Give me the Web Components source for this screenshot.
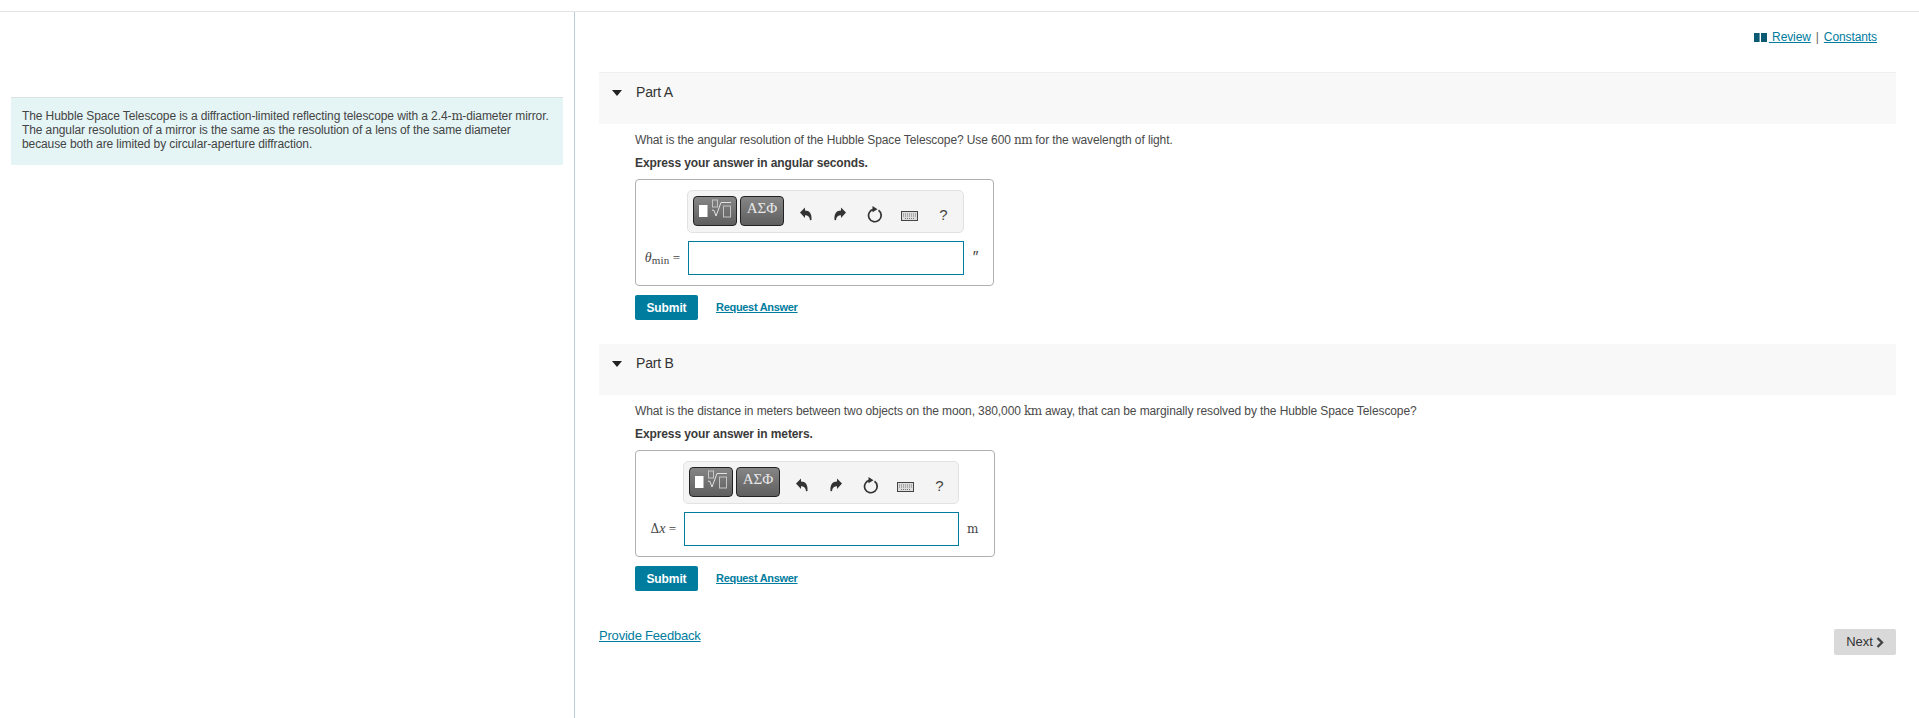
<!DOCTYPE html>
<html lang="en">
<head>
<meta charset="utf-8">
<title>Hubble Space Telescope</title>
<style>
html,body{margin:0;padding:0;background:#fff;height:100%}
body{font:12px/14px "Liberation Sans",Arial,sans-serif;color:#333;overflow:hidden;letter-spacing:-.1px}
</style>
</head>
<body>
<mp-page>
  <mp-intro slot="left">The Hubble Space Telescope is a diffraction-limited reflecting telescope with a 2.4-<mp-math>m</mp-math>-diameter mirror. The angular resolution of a mirror is the same as the resolution of a lens of the same diameter because both are limited by circular-aperture diffraction.</mp-intro>
  <mp-top-links slot="right"></mp-top-links>
  <mp-part slot="right" first title="Part A" instruction="Express your answer in angular seconds.">
    <span slot="question">What is the angular resolution of the Hubble Space Telescope? Use 600 <mp-math>nm</mp-math> for the wavelength of light.</span>
    <mp-answer label-col="51px" main-col="277px" unit-col="28px">
      <span slot="label"><i style="font-size:14px">θ</i><span style="font-size:11px;position:relative;top:2px;letter-spacing:.2px">min</span> =</span>
      <span slot="unit" style="font:italic 16px 'Liberation Sans',sans-serif">″</span>
    </mp-answer>
  </mp-part>
  <mp-part slot="right" title="Part B" instruction="Express your answer in meters.">
    <span slot="question">What is the distance in meters between two objects on the moon, 380,000 <mp-math>km</mp-math> away, that can be marginally resolved by the Hubble Space Telescope?</span>
    <mp-answer label-col="47px" main-col="276px" unit-col="34px">
      <span slot="label"><span style="font:12px 'DejaVu Serif',serif">Δ</span><i style="font-size:14px">x</i> =</span>
      <span slot="unit">m</span>
    </mp-answer>
  </mp-part>
  <mp-footer slot="right"></mp-footer>
</mp-page>
<script>
function def(name, html, init){
  customElements.define(name, class extends HTMLElement{
    constructor(){super();this.attachShadow({mode:'open'}).innerHTML=html;}
    connectedCallback(){ if(init) init(this); }
  });
}
def('mp-page',`<style>
:host{display:block;height:718px;box-sizing:border-box;padding-top:11px}
.wrap{display:flex;height:100%;border-top:1px solid #e2e4e6;box-sizing:border-box}
.left{width:575px;box-sizing:border-box;border-right:1px solid #bccbdc;padding:85px 11px 0 11px}
.right{flex:1;padding:0 23px 0 24px;min-width:0}
</style><div class="wrap"><div class="left"><slot name="left"></slot></div><div class="right"><slot name="right"></slot></div></div>`);
def('mp-math',`<style>:host{display:inline;font-family:"DejaVu Serif","Liberation Serif",serif;font-size:12px;letter-spacing:-.5px}</style><slot></slot>`);
def('mp-intro',`<style>
:host{display:block;background:#e5f5f6;border-top:1px solid #dde3e4;padding:11px 11px 12px 11px;height:68px;box-sizing:border-box;font:12px/14px "Liberation Sans",Arial,sans-serif;color:#444}
</style><slot></slot>`);
def('mp-top-links',`<style>
:host{display:flex;justify-content:flex-end;align-items:center;height:24px;margin:13px 19px 23px 0;font-size:12px;color:#666}
a{color:#007c9e;text-decoration:underline}
svg{display:block;margin-right:2px}
.sep{margin:0 5px}
</style>
<svg width="13" height="9" viewBox="0 0 13 9"><path fill="#0a5a73" d="M0 0h5.600v9H0zM7 0h6v9H7z"/></svg>
<a href="#">&nbsp;Review</a><span class="sep">|</span><a href="#">Constants</a>`);
def('mp-part',`<style>
:host{display:block;margin-bottom:24px}
:host([first]){border-top:1px solid #efefef}
.head{height:51px;box-sizing:border-box;background:#f8f8f8;padding:12px 0 0 12px;display:flex;color:#333;font-size:14px;line-height:15px;letter-spacing:-.2px}
.head svg{display:block;margin:5px 12px 0 0}
.body{padding-left:36px}
.q{color:#4a4a4a;line-height:14px;padding-top:9px}
.ins{color:#3a3a3a;font-weight:700;line-height:14px;padding-top:9px;margin-bottom:9px}
.act{display:flex;align-items:center;margin-top:9px}
a{color:#007c9e;font-size:11px;font-weight:700;margin:0 0 2px 18px;letter-spacing:-.3px}
button{all:unset;box-sizing:border-box;width:63px;height:25px;background:#007c9e;color:#fff;border-radius:2px;text-align:center;font:700 12px/24px "Liberation Sans",Arial,sans-serif}
</style>
<div class="head"><svg width="13" height="7" viewBox="0 0 13 7"><path fill="#222" d="M1 0h10L6 6z"/></svg><span class="t"></span></div>
<div class="body"><div class="q"><slot name="question"></slot></div><div class="ins"></div><slot></slot>
<div class="act"><button>Submit</button><a href="#">Request Answer</a></div></div>`,
el=>{el.shadowRoot.querySelector('.t').textContent=el.getAttribute('title');el.shadowRoot.querySelector('.ins').textContent=el.getAttribute('instruction');});
def('mp-toolbar',`<style>
:host{display:flex;align-items:flex-start;box-sizing:border-box;height:43px;background:#f4f4f4;border:1px solid #e2e2e2;border-radius:5px;padding:5px 0 0 5px}
.b{box-sizing:border-box;width:44px;height:30px;margin-right:3px;border:1px solid #222;border-radius:4px;background:linear-gradient(#858585,#5f5f5f);display:flex;justify-content:center;color:#e8e8e8}
.g{font:15px/23px "Liberation Serif",serif}
.i{width:34.3px;height:36px;display:flex;align-items:center;justify-content:center;color:#444;font:15px "Liberation Sans",Arial,sans-serif}
.first{margin-left:2px}
</style>
<div class="b"><svg width="42" height="28" viewBox="0 0 42 28"><rect x="5" y="8" width="8.500" height="12" fill="#fff"/><rect x="18.500" y="3" width="5" height="7" fill="none" stroke="#c4c4c4"/><path d="M18 13l2 .5 2 5.500 5-13.500h10" fill="none" stroke="#e2e2e2"/><rect x="29.500" y="9" width="7" height="11" fill="none" stroke="#c4c4c4"/></svg></div>
<div class="b g">ΑΣΦ</div>
<div class="i first"><svg width="14" height="14" viewBox="0 0 14 14"><path fill="#333" d="M1 5.500L6 .5v3c4.500 0 7 3 6.500 9.500l-1.500.3C10.800 9.800 9 8.200 6 8.200V11z"/></svg></div>
<div class="i"><svg width="14" height="14" viewBox="0 0 14 14"><path fill="#333" d="M13 5.500L8 .5v3c-4.500 0-7 3-6.500 9.500l1.500.3C3.200 9.800 5 8.200 8 8.200V11z"/></svg></div>
<div class="i"><svg width="16" height="17" viewBox="0 0 16 17"><path fill="none" stroke="#333" stroke-width="1.700" d="M11.500 4.300a6.300 6.300 0 1 1-5-1"/><path fill="#333" d="M5.500 0l5 3.200-5 3z"/></svg></div>
<div class="i"><svg width="17" height="10" viewBox="0 0 17 10" style="margin-top:3px"><rect x=".5" y=".5" width="16" height="9" fill="#ddd" stroke="#444"/><path stroke="#777" stroke-dasharray="1 1" d="M2 3h13M2 5h13M4 7.500h9"/></svg></div>
<div class="i">?</div>`);
def('mp-answer',`<style>
:host{display:grid;width:max-content;box-sizing:border-box;grid-template-columns:var(--l) var(--m) var(--u);grid-template-rows:43px 34px;row-gap:8px;border:1px solid #b0b0b0;border-radius:4px;padding:10px 1px 10px 0;font:13px "Liberation Serif",serif;color:#444;letter-spacing:0}
.lab{grid-row:2;grid-column:1;align-self:center;text-align:right;padding-right:7px;white-space:nowrap}
.box{grid-row:2;grid-column:2;box-sizing:border-box;border:1px solid #007c9e;background:#fff;margin-left:1px}
.unit{grid-row:2;grid-column:3;align-self:center;padding-left:8px;font-size:12px;font-family:"DejaVu Serif",serif;letter-spacing:-.5px}
mp-toolbar{grid-row:1;grid-column:2}
</style><mp-toolbar></mp-toolbar><div class="lab"><slot name="label"></slot></div><div class="box"></div><div class="unit"><slot name="unit"></slot></div>`,
el=>{el.style.setProperty('--l',el.getAttribute('label-col'));el.style.setProperty('--m',el.getAttribute('main-col'));el.style.setProperty('--u',el.getAttribute('unit-col'));});
def('mp-footer',`<style>
:host{display:flex;justify-content:space-between;align-items:flex-start;margin-top:37px}
a{color:#007c9e;font-size:13px;line-height:16px;letter-spacing:-.2px}
.n{box-sizing:border-box;width:62px;height:26px;margin-top:1px;background:#d9d9d9;border-radius:2px;display:flex;align-items:center;justify-content:center;gap:3px;font-size:13px;color:#333}
</style><a href="#">Provide Feedback</a><div class="n">Next<svg width="8" height="11" viewBox="0 0 8 11"><path fill="none" stroke="#444" stroke-width="2.400" d="M1.500 1l4.500 4.500-4.500 4.500"/></svg></div>`);
</script>
</body>
</html>
